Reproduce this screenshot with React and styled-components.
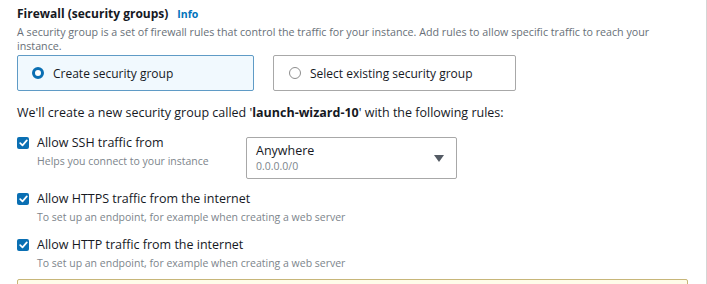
import React from "react";
import styled, { createGlobalStyle } from "styled-components";

const Global = createGlobalStyle`
  html, body { margin: 0; padding: 0; background: #fff; }
  body { font-family: "Open Sans", "Noto Sans", sans-serif; color: #16191f; }
`;

const Page = styled.div`
  width: 707px;
  height: 284px;
  overflow: hidden;
  box-sizing: border-box;
  border-right: 1px solid #d5d5d5;
  padding: 5px 0 0 17px;
`;

const Header = styled.div`
  display: flex;
  align-items: baseline;
  gap: 9px;
`;

const Title = styled.h2`
  margin: 0;
  font-size: 12px;
  font-weight: 700;
  line-height: 18px;
  color: #16191f;
`;

const InfoLink = styled.a`
  font-size: 10.5px;
  font-weight: 700;
  color: #0073bb;
  text-decoration: none;
`;

const Desc = styled.p`
  margin: 2px 0 0;
  width: 660px;
  font-size: 10.7px;
  line-height: 14px;
  color: #687078;
`;

const Tiles = styled.div`
  display: flex;
  gap: 19px;
  margin-top: 2px;
`;

const Tile = styled.label`
  box-sizing: border-box;
  width: ${(p) => p.$w}px;
  height: 36px;
  display: flex;
  align-items: center;
  gap: 9px;
  padding-left: ${(p) => p.$pl}px;
  border: 1px solid ${(p) => (p.$selected ? "#5f9bc6" : "#a8a8a8")};
  background: ${(p) => (p.$selected ? "#f1f9fe" : "#fff")};
  border-radius: 2px;
  font-size: 12px;
  color: #16191f;
`;

const Radio = styled.span`
  box-sizing: border-box;
  width: 12px;
  height: 12px;
  border-radius: 50%;
  border: ${(p) => (p.$checked ? "3.5px solid #0a6fb3" : "1px solid #8d8d8d")};
  background: #fff;
  flex: none;
`;

const Lead = styled.p`
  margin: 13px 0 0;
  font-size: 12.5px;
  line-height: 17px;
  color: #16191f;
  b { font-weight: 700; }
`;

const Rules = styled.div`
  display: flex;
  flex-direction: column;
  gap: 11px;
  margin-top: 13px;
`;

const RuleRow = styled.div`
  display: flex;
  align-items: flex-start;
`;

const Check = styled.span`
  box-sizing: border-box;
  width: 12px;
  height: 12px;
  border-radius: 2px;
  background: #0a6fb3;
  flex: none;
  margin-top: 3px;
  display: flex;
  align-items: center;
  justify-content: center;
`;

const RuleText = styled.div`
  margin-left: 8px;
  width: ${(p) => (p.$w ? p.$w + "px" : "auto")};
`;

const RuleLabel = styled.div`
  font-size: 12.5px;
  line-height: 17px;
  color: #16191f;
`;

const RuleHint = styled.div`
  font-size: 10.5px;
  line-height: 15px;
  margin-top: 3px;
  color: #7d858c;
`;

const Select = styled.div`
  box-sizing: border-box;
  width: 211px;
  height: 42px;
  margin-top: 3px;
  border: 1px solid #a8a8a8;
  border-radius: 2px;
  display: flex;
  align-items: center;
  justify-content: space-between;
  padding: 0 12px 0 9px;
`;

const SelectValue = styled.div`
  display: flex;
  flex-direction: column;
`;

const SelectMain = styled.span`
  font-size: 12.5px;
  line-height: 17px;
  color: #16191f;
`;

const SelectSub = styled.span`
  font-size: 10.5px;
  line-height: 15px;
  color: #7d858c;
`;

const Caret = styled.span`
  width: 0;
  height: 0;
  border-left: 5px solid transparent;
  border-right: 5px solid transparent;
  border-top: 7px solid #545b64;
`;

const Notice = styled.div`
  box-sizing: border-box;
  width: 671px;
  height: 20px;
  margin-top: 8px;
  border: 1px solid #c7b679;
  background: #fffce9;
  border-radius: 2px;
`;

const Tick = () => (
  <svg width="9" height="8" viewBox="0 0 9 8">
    <path d="M1.2 4.2 L3.5 6.4 L7.8 1.4" fill="none" stroke="#fff" strokeWidth="1.7" strokeLinecap="round" strokeLinejoin="round" />
  </svg>
);

const rules = [
  { label: "Allow HTTPS traffic from the internet", hint: "To set up an endpoint, for example when creating a web server" },
  { label: "Allow HTTP traffic from the internet", hint: "To set up an endpoint, for example when creating a web server" },
];

export default function App() {
  return (
    <>
      <Global />
      <Page>
        <Header>
          <Title>Firewall (security groups)</Title>
          <InfoLink>Info</InfoLink>
        </Header>
        <Desc>
          A security group is a set of firewall rules that control the traffic for your instance. Add rules to allow specific traffic to reach your instance.
        </Desc>
        <Tiles>
          <Tile $selected $w={237} $pl={14}>
            <Radio $checked />
            Create security group
          </Tile>
          <Tile $w={243} $pl={15}>
            <Radio />
            Select existing security group
          </Tile>
        </Tiles>
        <Lead>
          We'll create a new security group called '<b>launch-wizard-10</b>' with the following rules:
        </Lead>
        <Rules>
          <RuleRow>
            <Check><Tick /></Check>
            <RuleText $w={209}>
              <RuleLabel>Allow SSH traffic from</RuleLabel>
              <RuleHint>Helps you connect to your instance</RuleHint>
            </RuleText>
            <Select>
              <SelectValue>
                <SelectMain>Anywhere</SelectMain>
                <SelectSub>0.0.0.0/0</SelectSub>
              </SelectValue>
              <Caret />
            </Select>
          </RuleRow>
          {rules.map((r) => (
            <RuleRow key={r.label}>
              <Check><Tick /></Check>
              <RuleText>
                <RuleLabel>{r.label}</RuleLabel>
                <RuleHint>{r.hint}</RuleHint>
              </RuleText>
            </RuleRow>
          ))}
        </Rules>
        <Notice />
      </Page>
    </>
  );
}
